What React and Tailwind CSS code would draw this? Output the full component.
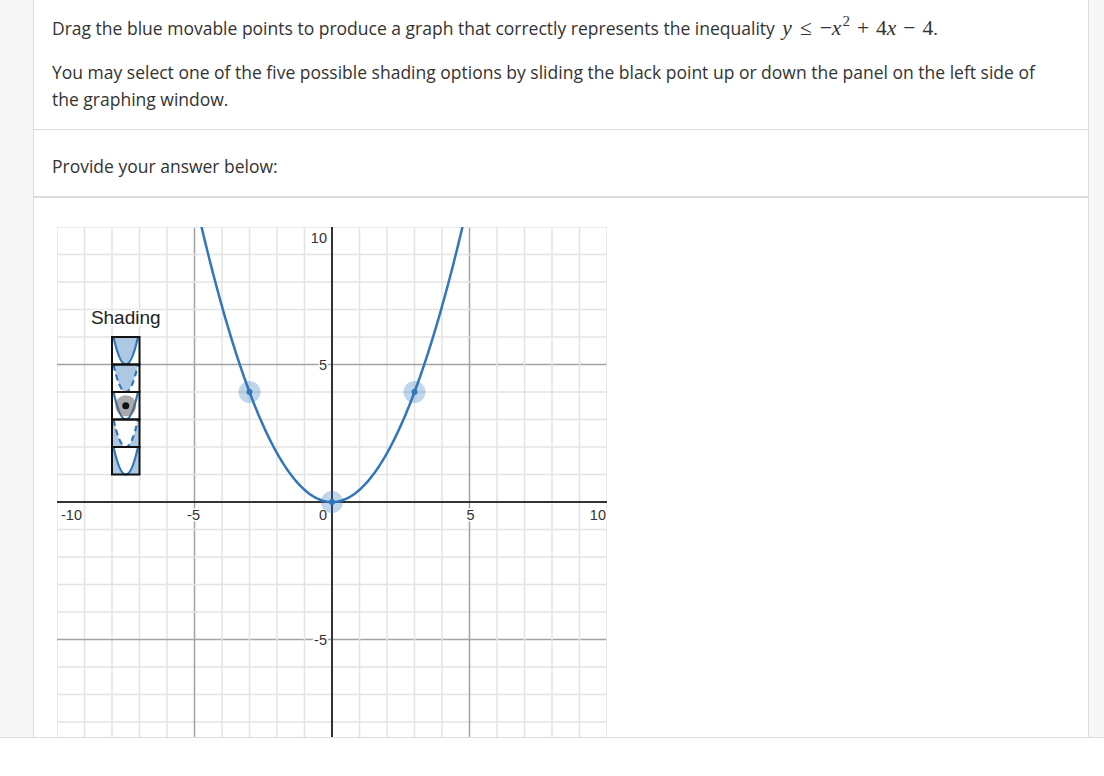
import React from "react";

const U = 27.5;
const X = (x) => 275 + U * x;
const Y = (y) => 275 - U * y;
const BLUE = "#3176ba";

function curvePath() {
  const pts = [];
  for (let x = -4.8; x <= 4.8001; x += 0.05) {
    pts.push(`${X(x).toFixed(2)},${Y((4 / 9) * x * x).toFixed(2)}`);
  }
  return "M" + pts.join(" L");
}

function Cell({ k }) {
  const x0 = 55;
  const y0 = 110 + U * k;
  const curve = `M${x0 + 1.5},${y0} Q${x0 + 13.75},${y0 + 55} ${x0 + 26},${y0}`;
  const inside = `${curve} Z`;
  const outside = `M${x0},${y0} L${x0 + 1.5},${y0} Q${x0 + 13.75},${y0 + 55} ${x0 + 26},${y0} L${x0 + U},${y0} L${x0 + U},${y0 + U} L${x0},${y0 + U} Z`;
  const shade = k < 2 ? inside : k > 2 ? outside : null;
  const dashed = k === 1 || k === 3;
  return (
    <g>
      <rect x={x0} y={y0} width={U} height={U} fill="#fff" />
      {shade && <path d={shade} fill={BLUE} fillOpacity="0.4" />}
      <path
        d={curve}
        fill="none"
        stroke={BLUE}
        strokeWidth="2.2"
        strokeDasharray={dashed ? "6 4" : undefined}
      />
    </g>
  );
}

function Graph() {
  const lines = [];
  for (let i = -10; i <= 10; i++) {
    if (i === 0) continue;
    const major = Math.abs(i) === 5;
    const c = major ? "#a3a3a3" : "#e3e3e3";
    const w = 1.5;
    lines.push(<line key={"v" + i} x1={X(i)} x2={X(i)} y1={0} y2={550} stroke={c} strokeWidth={w} />);
    lines.push(<line key={"h" + i} y1={Y(i)} y2={Y(i)} x1={0} x2={550} stroke={c} strokeWidth={w} />);
  }
  const lbl = {
    fontFamily: "Arial, 'Liberation Sans', sans-serif",
    fontSize: 14.5,
    fill: "#333",
    stroke: "#fff",
    strokeWidth: 3,
    paintOrder: "stroke",
  };
  return (
    <svg width="550" height="550" viewBox="0 0 550 550" className="block">
      <defs>
        <clipPath id="gclip">
          <rect x="0" y="0" width="550" height="550" />
        </clipPath>
      </defs>
      <rect x="0" y="0" width="550" height="550" fill="#fff" />
      {lines}
      <line x1={X(0)} x2={X(0)} y1={0} y2={550} stroke="#333" strokeWidth="2" />
      <line y1={Y(0)} y2={Y(0)} x1={0} x2={550} stroke="#333" strokeWidth="2" />
      {/* axis labels */}
      <text x={4} y={293} {...lbl}>-10</text>
      <text x={X(-5) - 1} y={293} textAnchor="middle" {...lbl}>-5</text>
      <text x={270} y={293} textAnchor="end" {...lbl}>0</text>
      <text x={X(5) + 1} y={293} textAnchor="middle" {...lbl}>5</text>
      <text x={549} y={293} textAnchor="end" {...lbl}>10</text>
      <text x={270} y={16} textAnchor="end" {...lbl}>10</text>
      <text x={270} y={Y(5) + 5} textAnchor="end" {...lbl}>5</text>
      <text x={270} y={Y(-5) + 5} textAnchor="end" {...lbl}>-5</text>

      {/* shading widget */}
      <text
        x={68.75}
        y={97}
        textAnchor="middle"
        fontFamily="Arial, 'Liberation Sans', sans-serif"
        fontSize="19"
        fill="#222"
        stroke="#fff"
        strokeWidth="3"
        paintOrder="stroke"
      >
        Shading
      </text>
      {[0, 1, 2, 3, 4].map((k) => (
        <Cell key={k} k={k} />
      ))}
      {[0, 1, 2, 3, 4].map((k) => (
        <rect key={"b" + k} x={55} y={110 + U * k} width={U} height={U} fill="none" stroke="#111" strokeWidth="2" />
      ))}
      <circle cx={68.75} cy={110 + U * 2.5} r="10.5" fill="#666" fillOpacity="0.55" />
      <circle cx={68.75} cy={110 + U * 2.5} r="3.5" fill="#111" />

      {/* curve */}
      <g clipPath="url(#gclip)">
        <path d={curvePath()} fill="none" stroke={BLUE} strokeWidth="2.5" />
      </g>
      {[[-3, 4], [3, 4], [0, 0]].map(([x, y], i) => (
        <g key={i}>
          <circle cx={X(x)} cy={Y(y)} r="11" fill={BLUE} fillOpacity="0.3" />
          <circle cx={X(x)} cy={Y(y)} r="3" fill={BLUE} />
        </g>
      ))}
    </svg>
  );
}

function MathExpr() {
  return (
    <span className="ml-[3px] font-['Liberation_Serif','DejaVu_Serif',serif] text-[21.5px] whitespace-nowrap">
      <i>y</i>
      <span className="mx-[8px]">≤</span>
      <span>−</span>
      <i>x</i>
      <sup className="text-[15px] leading-none relative -top-[9px] ml-[1px]">2</sup>
      <span className="mx-[7px]">+</span>
      <span>4</span>
      <i>x</i>
      <span className="mx-[7px]">−</span>
      <span>4</span>
    </span>
  );
}

export default function App() {
  return (
    <div className="w-[1104px] h-[776px] bg-white font-['Open_Sans',sans-serif] text-[#333]">
      <div className="flex h-[738px] border-b border-[#dcdcdc]">
        <div className="w-[33px] shrink-0 bg-[#f7f7f7]" />
        <div className="flex-1 flex flex-col bg-white border-x border-[#dcdcdc] overflow-hidden">
          <div className="pl-[18px] pr-[24px] pt-[15px] pb-[16px] border-b border-[#dcdcdc] text-[17.5px] leading-[27px]">
            <p>
              Drag the blue movable points to produce a graph that correctly represents the inequality <MathExpr />.
            </p>
            <p className="mt-[17px]">
              You may select one of the five possible shading options by sliding the black point up or down the panel on the left side of the graphing window.
            </p>
          </div>
          <div className="px-[18px] pt-[23px] pb-[16px] border-b-2 border-[#dcdcdc] text-[17.5px] leading-[27px]">
            Provide your answer below:
          </div>
          <div className="flex-1 pl-[23px] pt-[29px] overflow-hidden">
            <Graph />
          </div>
        </div>
        <div className="w-[15px] shrink-0 bg-[#f7f7f7]" />
      </div>
    </div>
  );
}
